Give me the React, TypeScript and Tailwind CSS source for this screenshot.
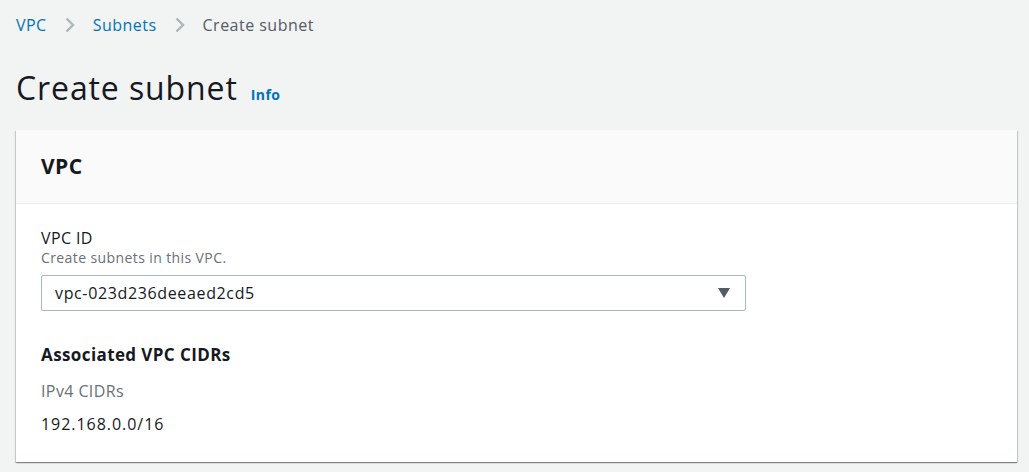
function Chevron() {
  return (
    <svg width="12" height="16" viewBox="0 0 12 16" className="mx-[17px]">
      <path d="M2.5 1.5L9 8l-6.5 6.5" fill="none" stroke="#aab7b8" strokeWidth="2.4" />
    </svg>
  );
}

export default function App() {
  return (
    <div
      className="min-h-[472px] bg-[#f2f3f3] px-4 pt-[12px] tracking-[0.025em] text-[#16191f]"
      style={{ fontFamily: '"Open Sans", Roboto, sans-serif' }}
    >
      <nav className="flex h-[26px] items-center text-[16px] tracking-[0.03em]">
        <span className="text-[#0073bb]">VPC</span>
        <Chevron />
        <span className="text-[#0073bb]">Subnets</span>
        <Chevron />
        <span className="text-[#545b64]">Create subnet</span>
      </nav>

      <div className="mt-[30px] flex items-baseline gap-[13px]">
        <h1 className="text-[32px] leading-[40px] font-normal tracking-[0.028em]">Create subnet</h1>
        <span className="text-[14px] font-bold text-[#0073bb]">Info</span>
      </div>

      <section className="mt-[22px] w-[1001px] bg-white shadow-[0_1px_1px_0_rgba(0,28,36,0.3),1px_1px_1px_0_rgba(0,28,36,0.15),-1px_1px_1px_0_rgba(0,28,36,0.15)]">
        <header className="flex h-[74px] items-center border-b border-[#eaeded] bg-[#fafafa] px-[25px]">
          <h2 className="text-[21px] font-bold">VPC</h2>
        </header>

        <div className="px-[25px] pt-[23px] pb-[27px]">
          <div className="text-[16px] leading-[22px]">VPC ID</div>
          <div className="text-[14px] leading-[18px] text-[#687078]">Create subnets in this VPC.</div>
          <div className="mt-[8px] flex h-[36px] w-[705px] items-center justify-between rounded-[2px] border border-[#aab7b8] pr-[15px] pl-[13px]">
            <span className="text-[16px] tracking-[0.04em]">vpc-023d236deeaed2cd5</span>
            <svg width="12" height="10" viewBox="0 0 12 10">
              <path d="M0 0h12L6 10z" fill="#545b64" />
            </svg>
          </div>

          <h3 className="mt-[31px] text-[17px] leading-[26px] font-bold">Associated VPC CIDRs</h3>
          <div className="mt-[12px] text-[16px] leading-[22px] text-[#687078]">IPv4 CIDRs</div>
          <div className="mt-[11px] text-[16px] leading-[22px] tracking-[0.06em]">192.168.0.0/16</div>
        </div>
      </section>
    </div>
  );
}
